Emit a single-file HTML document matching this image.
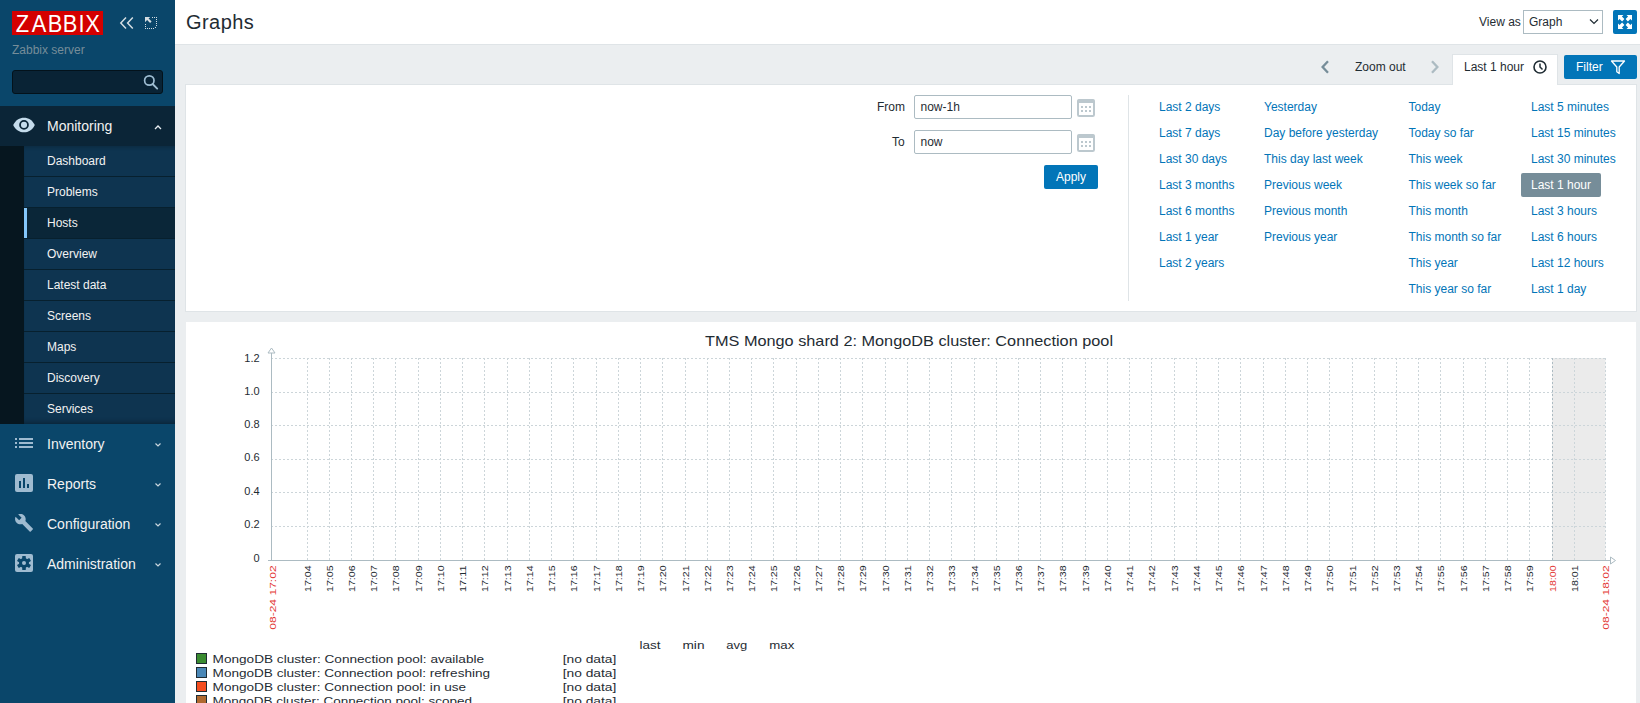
<!DOCTYPE html>
<html><head><meta charset="utf-8"><title>Graphs</title>
<style>
html,body{margin:0;padding:0;width:1640px;height:703px;overflow:hidden;background:#ebeef0;font-family:"Liberation Sans", sans-serif;}
.t{position:absolute;white-space:nowrap;}
</style></head><body>
<div id="sb" style="position:absolute;left:0;top:0;width:175px;height:703px;background:#0a466a"></div>
<div style="position:absolute;left:12px;top:11px;width:91px;height:24px;background:#d40000"></div>
<svg style="position:absolute;left:0;top:0" width="110" height="40" font-family='"Liberation Sans", sans-serif' font-size="23" fill="#fff"><text transform="translate(22.4 31.6) scale(0.95 1)" text-anchor="middle">Z</text><text transform="translate(39.1 31.6) scale(0.95 1)" text-anchor="middle">A</text><text transform="translate(55.0 31.6) scale(0.95 1)" text-anchor="middle">B</text><text transform="translate(70.1 31.6) scale(0.95 1)" text-anchor="middle">B</text><text transform="translate(81.6 31.6) scale(0.95 1)" text-anchor="middle">I</text><text transform="translate(92.6 31.6) scale(0.95 1)" text-anchor="middle">X</text></svg>
<svg style="position:absolute;left:115px;top:12px" width="50" height="22" viewBox="0 0 50 22">
<path d="M11 5.5 L5.8 11 L11 16.5 M17.8 5.5 L12.6 11 L17.8 16.5" stroke="#d4dde2" stroke-width="1.5" fill="none"/></svg>
<svg style="position:absolute;left:140px;top:12px" width="22" height="22" viewBox="140 12 22 22" shape-rendering="crispEdges"><rect x="152" y="17" width="1" height="1" fill="#d4dde2"/><rect x="154" y="17" width="1" height="1" fill="#d4dde2"/><rect x="156" y="17" width="1" height="1" fill="#d4dde2"/><rect x="156" y="19" width="1" height="1" fill="#d4dde2"/><rect x="156" y="21" width="1" height="1" fill="#d4dde2"/><rect x="156" y="23" width="1" height="1" fill="#d4dde2"/><rect x="156" y="25" width="1" height="1" fill="#d4dde2"/><rect x="145" y="24" width="1" height="1" fill="#d4dde2"/><rect x="145" y="26" width="1" height="1" fill="#d4dde2"/><rect x="145" y="28" width="1" height="1" fill="#d4dde2"/><rect x="147" y="28" width="1" height="1" fill="#d4dde2"/><rect x="149" y="28" width="1" height="1" fill="#d4dde2"/><rect x="151" y="28" width="1" height="1" fill="#d4dde2"/><rect x="153" y="28" width="1" height="1" fill="#d4dde2"/><rect x="155" y="27" width="1" height="1" fill="#d4dde2"/></svg>
<svg style="position:absolute;left:140px;top:12px" width="22" height="22" viewBox="140 12 22 22"><path d="M145 17 H150.2 L148.6 18.6 L151.6 21.6 L150.1 23.1 L147.1 20.1 L145 22.2 Z" fill="#d4dde2"/></svg>
<div class="t" style="left:12px;top:43.54px;font-size:12px;line-height:12px;color:#768d99;">Zabbix server</div>
<div style="position:absolute;left:12px;top:70px;width:149px;height:22px;border:1px solid #03121b;border-radius:3px;background:#092335"></div>
<svg style="position:absolute;left:140px;top:72px" width="20" height="20" viewBox="0 0 20 20">
<circle cx="9.3" cy="8.5" r="4.7" stroke="#9ebdd2" stroke-width="1.7" fill="none"/>
<path d="M12.6 12 L17.2 16.6" stroke="#9ebdd2" stroke-width="1.9" stroke-linecap="round"/></svg>
<div style="position:absolute;left:0;top:106px;width:175px;height:40px;background:#0b2537"></div>
<svg style="position:absolute;left:13px;top:117px" width="22" height="16" viewBox="0 0 22 16">
<path d="M0.2 8 C4.5 -1.8 17.5 -1.8 21.8 8 C17.5 17.8 4.5 17.8 0.2 8 Z" fill="#c5dcec"/>
<circle cx="11" cy="7.9" r="3.95" fill="none" stroke="#0b2537" stroke-width="1.8"/></svg>
<div class="t" style="left:47px;top:118.85px;font-size:14px;line-height:14px;color:#f2f2f2;">Monitoring</div>
<svg style="position:absolute;left:153px;top:123px" width="10" height="8" viewBox="0 0 10 8"><path d="M2 6 L5 3 L8 6" stroke="#e8eef2" stroke-width="1.3" fill="none"/></svg>
<div style="position:absolute;left:0;top:146px;width:24px;height:278px;background:#06161f"></div>
<div style="position:absolute;left:24px;top:146px;width:151px;height:278px;background:#0e3450;box-shadow:inset 0 4px 4px -3px rgba(0,0,0,.22), inset 0 -6px 5px -4px rgba(0,0,0,.3)"></div>
<div style="position:absolute;left:24px;top:176px;width:151px;height:1px;background:#07202e"></div>
<div class="t" style="left:47px;top:155.14px;font-size:12px;line-height:12px;color:#f2f2f2;">Dashboard</div>
<div style="position:absolute;left:24px;top:207px;width:151px;height:1px;background:#07202e"></div>
<div class="t" style="left:47px;top:186.14px;font-size:12px;line-height:12px;color:#f2f2f2;">Problems</div>
<div style="position:absolute;left:24px;top:208px;width:151px;height:30px;background:#0a2638"></div>
<div style="position:absolute;left:24px;top:208px;width:3px;height:30px;background:#84c7fb"></div>
<div style="position:absolute;left:24px;top:238px;width:151px;height:1px;background:#07202e"></div>
<div class="t" style="left:47px;top:217.14px;font-size:12px;line-height:12px;color:#f2f2f2;">Hosts</div>
<div style="position:absolute;left:24px;top:269px;width:151px;height:1px;background:#07202e"></div>
<div class="t" style="left:47px;top:248.14px;font-size:12px;line-height:12px;color:#f2f2f2;">Overview</div>
<div style="position:absolute;left:24px;top:300px;width:151px;height:1px;background:#07202e"></div>
<div class="t" style="left:47px;top:279.14px;font-size:12px;line-height:12px;color:#f2f2f2;">Latest data</div>
<div style="position:absolute;left:24px;top:331px;width:151px;height:1px;background:#07202e"></div>
<div class="t" style="left:47px;top:310.14px;font-size:12px;line-height:12px;color:#f2f2f2;">Screens</div>
<div style="position:absolute;left:24px;top:362px;width:151px;height:1px;background:#07202e"></div>
<div class="t" style="left:47px;top:341.14px;font-size:12px;line-height:12px;color:#f2f2f2;">Maps</div>
<div style="position:absolute;left:24px;top:393px;width:151px;height:1px;background:#07202e"></div>
<div class="t" style="left:47px;top:372.14px;font-size:12px;line-height:12px;color:#f2f2f2;">Discovery</div>
<div class="t" style="left:47px;top:403.14px;font-size:12px;line-height:12px;color:#f2f2f2;">Services</div>
<div class="t" style="left:47px;top:436.95px;font-size:14px;line-height:14px;color:#f2f2f2;">Inventory</div>
<svg style="position:absolute;left:153px;top:441px" width="10" height="8" viewBox="0 0 10 8"><path d="M2.5 2.5 L5 5 L7.5 2.5" stroke="#c9d6de" stroke-width="1.2" fill="none"/></svg>
<div class="t" style="left:47px;top:476.95px;font-size:14px;line-height:14px;color:#f2f2f2;">Reports</div>
<svg style="position:absolute;left:153px;top:481px" width="10" height="8" viewBox="0 0 10 8"><path d="M2.5 2.5 L5 5 L7.5 2.5" stroke="#c9d6de" stroke-width="1.2" fill="none"/></svg>
<div class="t" style="left:47px;top:516.95px;font-size:14px;line-height:14px;color:#f2f2f2;">Configuration</div>
<svg style="position:absolute;left:153px;top:521px" width="10" height="8" viewBox="0 0 10 8"><path d="M2.5 2.5 L5 5 L7.5 2.5" stroke="#c9d6de" stroke-width="1.2" fill="none"/></svg>
<div class="t" style="left:47px;top:556.95px;font-size:14px;line-height:14px;color:#f2f2f2;">Administration</div>
<svg style="position:absolute;left:153px;top:561px" width="10" height="8" viewBox="0 0 10 8"><path d="M2.5 2.5 L5 5 L7.5 2.5" stroke="#c9d6de" stroke-width="1.2" fill="none"/></svg>
<svg style="position:absolute;left:15px;top:438px" width="18" height="12" viewBox="0 0 18 12" fill="#9fbbd0">
<rect x="0" y="0" width="2" height="2"/><rect x="4" y="0" width="14" height="2"/>
<rect x="0" y="4" width="2" height="2"/><rect x="4" y="4" width="14" height="2"/>
<rect x="0" y="8" width="2" height="2"/><rect x="4" y="8" width="14" height="2"/></svg>
<svg style="position:absolute;left:15px;top:474px" width="18" height="18" viewBox="0 0 18 18">
<rect x="0" y="0" width="18" height="18" rx="2" fill="#9fbbd0"/>
<rect x="4" y="7" width="2" height="7" fill="#0a466a"/><rect x="8" y="4" width="2" height="10" fill="#0a466a"/><rect x="12" y="10" width="2" height="4" fill="#0a466a"/></svg>
<svg style="position:absolute;left:15px;top:514px" width="18" height="18" viewBox="0.9 1.3 22.1 22.1">
<path fill="#9fbbd0" d="M22.7 19l-9.1-9.1c.9-2.3.4-5-1.5-6.9-2-2-5-2.4-7.4-1.3L9 6 6 9 1.6 4.7C.4 7.1.9 10.1 2.9 12.1c1.9 1.9 4.6 2.4 6.9 1.5l9.1 9.1c.4.4 1 .4 1.4 0l2.3-2.3c.5-.4.5-1.1.1-1.4z"/></svg>
<svg style="position:absolute;left:15px;top:554px" width="18" height="18" viewBox="0 0 18 18">
<rect x="0" y="0" width="18" height="18" rx="2" fill="#9fbbd0"/>
<g transform="translate(9 9)" fill="#0a466a">
<circle r="5"/>
<rect x="-1.8" y="-7.1" width="3.6" height="14.2" rx="0.6"/>
<rect x="-1.8" y="-7.1" width="3.6" height="14.2" rx="0.6" transform="rotate(60)"/>
<rect x="-1.8" y="-7.1" width="3.6" height="14.2" rx="0.6" transform="rotate(120)"/>
<circle r="2" fill="#9fbbd0"/></g></svg>
<div style="position:absolute;left:175px;top:0;width:1465px;height:44px;background:#fff;border-bottom:1px solid #dfe4e7"></div>
<div class="t" style="left:186px;top:11.87px;font-size:20px;line-height:20px;color:#1f2c33;letter-spacing:0.45px;">Graphs</div>
<div class="t" style="left:1479px;top:15.54px;font-size:12px;line-height:12px;color:#1f2c33;">View as</div>
<div style="position:absolute;left:1523px;top:10px;width:78px;height:22px;border:1px solid #acbbc2;background:#fff"></div>
<div class="t" style="left:1529px;top:15.54px;font-size:12px;line-height:12px;color:#1f2c33;">Graph</div>
<svg style="position:absolute;left:1588px;top:17px" width="12" height="9" viewBox="0 0 12 9"><path d="M2 2.5 L6 6.5 L10 2.5" stroke="#1f2c33" stroke-width="1.2" fill="none"/></svg>
<div style="position:absolute;left:1613px;top:10px;width:24px;height:24px;background:#0275b8;border-radius:2px"></div>
<svg style="position:absolute;left:1613px;top:10px" width="24" height="24" viewBox="0 0 24 24" fill="#fff">
<g transform="translate(5 5)"><path d="M0 0 H5.5 L3.9 1.6 L6.4 4.1 L4.1 6.4 L1.6 3.9 L0 5.5 Z"/></g>
<g transform="translate(19 5) scale(-1 1)"><path d="M0 0 H5.5 L3.9 1.6 L6.4 4.1 L4.1 6.4 L1.6 3.9 L0 5.5 Z"/></g>
<g transform="translate(5 19) scale(1 -1)"><path d="M0 0 H5.5 L3.9 1.6 L6.4 4.1 L4.1 6.4 L1.6 3.9 L0 5.5 Z"/></g>
<g transform="translate(19 19) scale(-1 -1)"><path d="M0 0 H5.5 L3.9 1.6 L6.4 4.1 L4.1 6.4 L1.6 3.9 L0 5.5 Z"/></g></svg>
<svg style="position:absolute;left:1316px;top:58px" width="18" height="18" viewBox="0 0 18 18"><path d="M12 3.2 L6.6 9 L12 14.8" stroke="#768d99" stroke-width="2.3" fill="none"/></svg>
<div class="t" style="left:1355px;top:60.84px;font-size:12px;line-height:12px;color:#1f2c33;">Zoom out</div>
<svg style="position:absolute;left:1426px;top:58px" width="18" height="18" viewBox="0 0 18 18"><path d="M6 3.2 L11.4 9 L6 14.8" stroke="#acbbc2" stroke-width="2.3" fill="none"/></svg>
<div style="position:absolute;left:185px;top:84px;width:1450px;height:226px;background:#fff;border:1px solid #dfe4e7"></div>
<div style="position:absolute;left:1452px;top:54px;width:104px;height:30px;background:#fff;border:1px solid #dfe4e7;border-bottom:none"></div>
<div class="t" style="left:1464px;top:60.64px;font-size:12px;line-height:12px;color:#1f2c33;">Last 1 hour</div>
<svg style="position:absolute;left:1532px;top:59px" width="16" height="16" viewBox="0 0 16 16"><circle cx="8" cy="8" r="6" stroke="#1f2c33" stroke-width="1.6" fill="none"/><path d="M8 4.5 V8 L10.5 10.5" stroke="#1f2c33" stroke-width="1.5" fill="none"/></svg>
<div style="position:absolute;left:1564px;top:55px;width:73px;height:24px;background:#0275b8;border-radius:2px"></div>
<div class="t" style="left:1576px;top:60.64px;font-size:12px;line-height:12px;color:#ffffff;">Filter</div>
<svg style="position:absolute;left:1609px;top:58px" width="18" height="18" viewBox="0 0 18 18"><path d="M2.5 3 H15.5 L10.2 9 V15.5 L7.8 13.8 V9 Z" stroke="#fff" stroke-width="1.3" fill="none" stroke-linejoin="round"/></svg>
<div class="t" style="left:877px;top:101.34px;font-size:12px;line-height:12px;color:#1f2c33;">From</div>
<div class="t" style="left:892px;top:136.34px;font-size:12px;line-height:12px;color:#1f2c33;">To</div>
<div style="position:absolute;left:914px;top:95px;width:156px;height:22px;border:1px solid #acbbc2;border-radius:2px;background:#fff"></div>
<div class="t" style="left:920.5px;top:101.34px;font-size:12px;line-height:12px;color:#1f2c33;">now-1h</div>
<svg style="position:absolute;left:1077px;top:99px" width="18" height="18" viewBox="0 0 18 18">
<rect x="1" y="1" width="16" height="16" rx="1.3" fill="none" stroke="#bcc8ce" stroke-width="2"/>
<rect x="0.5" y="0.5" width="17" height="3.4" rx="1" fill="#bcc8ce"/>
<g fill="#bcc8ce"><rect x="4" y="7" width="2" height="2"/><rect x="8" y="7" width="2" height="2"/><rect x="12" y="7" width="2" height="2"/>
<rect x="4" y="11" width="2" height="2"/><rect x="8" y="11" width="2" height="2"/><rect x="12" y="11" width="2" height="2"/></g></svg>
<div style="position:absolute;left:914px;top:130px;width:156px;height:22px;border:1px solid #acbbc2;border-radius:2px;background:#fff"></div>
<div class="t" style="left:920.5px;top:136.34px;font-size:12px;line-height:12px;color:#1f2c33;">now</div>
<svg style="position:absolute;left:1077px;top:134px" width="18" height="18" viewBox="0 0 18 18">
<rect x="1" y="1" width="16" height="16" rx="1.3" fill="none" stroke="#bcc8ce" stroke-width="2"/>
<rect x="0.5" y="0.5" width="17" height="3.4" rx="1" fill="#bcc8ce"/>
<g fill="#bcc8ce"><rect x="4" y="7" width="2" height="2"/><rect x="8" y="7" width="2" height="2"/><rect x="12" y="7" width="2" height="2"/>
<rect x="4" y="11" width="2" height="2"/><rect x="8" y="11" width="2" height="2"/><rect x="12" y="11" width="2" height="2"/></g></svg>
<div style="position:absolute;left:1044px;top:165px;width:54px;height:24px;background:#0275b8;border-radius:2px"></div>
<div class="t" style="left:1056px;top:171.34px;font-size:12px;line-height:12px;color:#ffffff;">Apply</div>
<div style="position:absolute;left:1128px;top:95px;width:1px;height:206px;background:#dfe4e7"></div>
<div class="t" style="left:1159px;top:101.24px;font-size:12px;line-height:12px;color:#0275b8;">Last 2 days</div>
<div class="t" style="left:1159px;top:127.24px;font-size:12px;line-height:12px;color:#0275b8;">Last 7 days</div>
<div class="t" style="left:1159px;top:153.24px;font-size:12px;line-height:12px;color:#0275b8;">Last 30 days</div>
<div class="t" style="left:1159px;top:179.24px;font-size:12px;line-height:12px;color:#0275b8;">Last 3 months</div>
<div class="t" style="left:1159px;top:205.24px;font-size:12px;line-height:12px;color:#0275b8;">Last 6 months</div>
<div class="t" style="left:1159px;top:231.24px;font-size:12px;line-height:12px;color:#0275b8;">Last 1 year</div>
<div class="t" style="left:1159px;top:257.24px;font-size:12px;line-height:12px;color:#0275b8;">Last 2 years</div>
<div class="t" style="left:1264px;top:101.24px;font-size:12px;line-height:12px;color:#0275b8;">Yesterday</div>
<div class="t" style="left:1264px;top:127.24px;font-size:12px;line-height:12px;color:#0275b8;">Day before yesterday</div>
<div class="t" style="left:1264px;top:153.24px;font-size:12px;line-height:12px;color:#0275b8;">This day last week</div>
<div class="t" style="left:1264px;top:179.24px;font-size:12px;line-height:12px;color:#0275b8;">Previous week</div>
<div class="t" style="left:1264px;top:205.24px;font-size:12px;line-height:12px;color:#0275b8;">Previous month</div>
<div class="t" style="left:1264px;top:231.24px;font-size:12px;line-height:12px;color:#0275b8;">Previous year</div>
<div class="t" style="left:1408.5px;top:101.24px;font-size:12px;line-height:12px;color:#0275b8;">Today</div>
<div class="t" style="left:1408.5px;top:127.24px;font-size:12px;line-height:12px;color:#0275b8;">Today so far</div>
<div class="t" style="left:1408.5px;top:153.24px;font-size:12px;line-height:12px;color:#0275b8;">This week</div>
<div class="t" style="left:1408.5px;top:179.24px;font-size:12px;line-height:12px;color:#0275b8;">This week so far</div>
<div class="t" style="left:1408.5px;top:205.24px;font-size:12px;line-height:12px;color:#0275b8;">This month</div>
<div class="t" style="left:1408.5px;top:231.24px;font-size:12px;line-height:12px;color:#0275b8;">This month so far</div>
<div class="t" style="left:1408.5px;top:257.24px;font-size:12px;line-height:12px;color:#0275b8;">This year</div>
<div class="t" style="left:1408.5px;top:283.24px;font-size:12px;line-height:12px;color:#0275b8;">This year so far</div>
<div class="t" style="left:1531px;top:101.24px;font-size:12px;line-height:12px;color:#0275b8;">Last 5 minutes</div>
<div class="t" style="left:1531px;top:127.24px;font-size:12px;line-height:12px;color:#0275b8;">Last 15 minutes</div>
<div class="t" style="left:1531px;top:153.24px;font-size:12px;line-height:12px;color:#0275b8;">Last 30 minutes</div>
<div style="position:absolute;left:1521px;top:173px;width:80px;height:24px;background:#768d99;border-radius:2px"></div>
<div class="t" style="left:1531px;top:179.24px;font-size:12px;line-height:12px;color:#ffffff;">Last 1 hour</div>
<div class="t" style="left:1531px;top:205.24px;font-size:12px;line-height:12px;color:#0275b8;">Last 3 hours</div>
<div class="t" style="left:1531px;top:231.24px;font-size:12px;line-height:12px;color:#0275b8;">Last 6 hours</div>
<div class="t" style="left:1531px;top:257.24px;font-size:12px;line-height:12px;color:#0275b8;">Last 12 hours</div>
<div class="t" style="left:1531px;top:283.24px;font-size:12px;line-height:12px;color:#0275b8;">Last 1 day</div>
<div style="position:absolute;left:186px;top:322px;width:1450px;height:381px;background:#fff"></div>
<svg style="position:absolute;left:0;top:0" width="1640" height="703" viewBox="0 0 1640 703" font-family='"Liberation Sans", sans-serif'>
<rect x="1552.00" y="358.0" width="53.50" height="202.0" fill="#ebebeb"/>
<line x1="271" y1="358.5" x2="1605.5" y2="358.5" stroke="#ccd5d9" stroke-dasharray="2 2"/>
<line x1="271" y1="392.5" x2="1605.5" y2="392.5" stroke="#ccd5d9" stroke-dasharray="2 2"/>
<line x1="271" y1="425.5" x2="1605.5" y2="425.5" stroke="#ccd5d9" stroke-dasharray="2 2"/>
<line x1="271" y1="459.5" x2="1605.5" y2="459.5" stroke="#ccd5d9" stroke-dasharray="2 2"/>
<line x1="271" y1="492.5" x2="1605.5" y2="492.5" stroke="#ccd5d9" stroke-dasharray="2 2"/>
<line x1="271" y1="526.5" x2="1605.5" y2="526.5" stroke="#ccd5d9" stroke-dasharray="2 2"/>
<line x1="307.5" y1="358" x2="307.5" y2="560" stroke="#ccd5d9" stroke-dasharray="2 2"/>
<text transform="translate(310.90 565.4) rotate(-90)" text-anchor="end" font-size="9.95" fill="#1f2c33" textLength="26.6" lengthAdjust="spacingAndGlyphs">17:04</text>
<line x1="329.5" y1="358" x2="329.5" y2="560" stroke="#ccd5d9" stroke-dasharray="2 2"/>
<text transform="translate(332.90 565.4) rotate(-90)" text-anchor="end" font-size="9.95" fill="#1f2c33" textLength="26.6" lengthAdjust="spacingAndGlyphs">17:05</text>
<line x1="351.5" y1="358" x2="351.5" y2="560" stroke="#ccd5d9" stroke-dasharray="2 2"/>
<text transform="translate(354.90 565.4) rotate(-90)" text-anchor="end" font-size="9.95" fill="#1f2c33" textLength="26.6" lengthAdjust="spacingAndGlyphs">17:06</text>
<line x1="373.5" y1="358" x2="373.5" y2="560" stroke="#ccd5d9" stroke-dasharray="2 2"/>
<text transform="translate(376.90 565.4) rotate(-90)" text-anchor="end" font-size="9.95" fill="#1f2c33" textLength="26.6" lengthAdjust="spacingAndGlyphs">17:07</text>
<line x1="395.5" y1="358" x2="395.5" y2="560" stroke="#ccd5d9" stroke-dasharray="2 2"/>
<text transform="translate(398.90 565.4) rotate(-90)" text-anchor="end" font-size="9.95" fill="#1f2c33" textLength="26.6" lengthAdjust="spacingAndGlyphs">17:08</text>
<line x1="418.5" y1="358" x2="418.5" y2="560" stroke="#ccd5d9" stroke-dasharray="2 2"/>
<text transform="translate(421.90 565.4) rotate(-90)" text-anchor="end" font-size="9.95" fill="#1f2c33" textLength="26.6" lengthAdjust="spacingAndGlyphs">17:09</text>
<line x1="440.5" y1="358" x2="440.5" y2="560" stroke="#ccd5d9" stroke-dasharray="2 2"/>
<text transform="translate(443.90 565.4) rotate(-90)" text-anchor="end" font-size="9.95" fill="#1f2c33" textLength="26.6" lengthAdjust="spacingAndGlyphs">17:10</text>
<line x1="462.5" y1="358" x2="462.5" y2="560" stroke="#ccd5d9" stroke-dasharray="2 2"/>
<text transform="translate(465.90 565.4) rotate(-90)" text-anchor="end" font-size="9.95" fill="#1f2c33" textLength="26.6" lengthAdjust="spacingAndGlyphs">17:11</text>
<line x1="484.5" y1="358" x2="484.5" y2="560" stroke="#ccd5d9" stroke-dasharray="2 2"/>
<text transform="translate(487.90 565.4) rotate(-90)" text-anchor="end" font-size="9.95" fill="#1f2c33" textLength="26.6" lengthAdjust="spacingAndGlyphs">17:12</text>
<line x1="507.5" y1="358" x2="507.5" y2="560" stroke="#ccd5d9" stroke-dasharray="2 2"/>
<text transform="translate(510.90 565.4) rotate(-90)" text-anchor="end" font-size="9.95" fill="#1f2c33" textLength="26.6" lengthAdjust="spacingAndGlyphs">17:13</text>
<line x1="529.5" y1="358" x2="529.5" y2="560" stroke="#ccd5d9" stroke-dasharray="2 2"/>
<text transform="translate(532.90 565.4) rotate(-90)" text-anchor="end" font-size="9.95" fill="#1f2c33" textLength="26.6" lengthAdjust="spacingAndGlyphs">17:14</text>
<line x1="551.5" y1="358" x2="551.5" y2="560" stroke="#ccd5d9" stroke-dasharray="2 2"/>
<text transform="translate(554.90 565.4) rotate(-90)" text-anchor="end" font-size="9.95" fill="#1f2c33" textLength="26.6" lengthAdjust="spacingAndGlyphs">17:15</text>
<line x1="573.5" y1="358" x2="573.5" y2="560" stroke="#ccd5d9" stroke-dasharray="2 2"/>
<text transform="translate(576.90 565.4) rotate(-90)" text-anchor="end" font-size="9.95" fill="#1f2c33" textLength="26.6" lengthAdjust="spacingAndGlyphs">17:16</text>
<line x1="596.5" y1="358" x2="596.5" y2="560" stroke="#ccd5d9" stroke-dasharray="2 2"/>
<text transform="translate(599.90 565.4) rotate(-90)" text-anchor="end" font-size="9.95" fill="#1f2c33" textLength="26.6" lengthAdjust="spacingAndGlyphs">17:17</text>
<line x1="618.5" y1="358" x2="618.5" y2="560" stroke="#ccd5d9" stroke-dasharray="2 2"/>
<text transform="translate(621.90 565.4) rotate(-90)" text-anchor="end" font-size="9.95" fill="#1f2c33" textLength="26.6" lengthAdjust="spacingAndGlyphs">17:18</text>
<line x1="640.5" y1="358" x2="640.5" y2="560" stroke="#ccd5d9" stroke-dasharray="2 2"/>
<text transform="translate(643.90 565.4) rotate(-90)" text-anchor="end" font-size="9.95" fill="#1f2c33" textLength="26.6" lengthAdjust="spacingAndGlyphs">17:19</text>
<line x1="662.5" y1="358" x2="662.5" y2="560" stroke="#ccd5d9" stroke-dasharray="2 2"/>
<text transform="translate(665.90 565.4) rotate(-90)" text-anchor="end" font-size="9.95" fill="#1f2c33" textLength="26.6" lengthAdjust="spacingAndGlyphs">17:20</text>
<line x1="685.5" y1="358" x2="685.5" y2="560" stroke="#ccd5d9" stroke-dasharray="2 2"/>
<text transform="translate(688.90 565.4) rotate(-90)" text-anchor="end" font-size="9.95" fill="#1f2c33" textLength="26.6" lengthAdjust="spacingAndGlyphs">17:21</text>
<line x1="707.5" y1="358" x2="707.5" y2="560" stroke="#ccd5d9" stroke-dasharray="2 2"/>
<text transform="translate(710.90 565.4) rotate(-90)" text-anchor="end" font-size="9.95" fill="#1f2c33" textLength="26.6" lengthAdjust="spacingAndGlyphs">17:22</text>
<line x1="729.5" y1="358" x2="729.5" y2="560" stroke="#ccd5d9" stroke-dasharray="2 2"/>
<text transform="translate(732.90 565.4) rotate(-90)" text-anchor="end" font-size="9.95" fill="#1f2c33" textLength="26.6" lengthAdjust="spacingAndGlyphs">17:23</text>
<line x1="751.5" y1="358" x2="751.5" y2="560" stroke="#ccd5d9" stroke-dasharray="2 2"/>
<text transform="translate(754.90 565.4) rotate(-90)" text-anchor="end" font-size="9.95" fill="#1f2c33" textLength="26.6" lengthAdjust="spacingAndGlyphs">17:24</text>
<line x1="773.5" y1="358" x2="773.5" y2="560" stroke="#ccd5d9" stroke-dasharray="2 2"/>
<text transform="translate(776.90 565.4) rotate(-90)" text-anchor="end" font-size="9.95" fill="#1f2c33" textLength="26.6" lengthAdjust="spacingAndGlyphs">17:25</text>
<line x1="796.5" y1="358" x2="796.5" y2="560" stroke="#ccd5d9" stroke-dasharray="2 2"/>
<text transform="translate(799.90 565.4) rotate(-90)" text-anchor="end" font-size="9.95" fill="#1f2c33" textLength="26.6" lengthAdjust="spacingAndGlyphs">17:26</text>
<line x1="818.5" y1="358" x2="818.5" y2="560" stroke="#ccd5d9" stroke-dasharray="2 2"/>
<text transform="translate(821.90 565.4) rotate(-90)" text-anchor="end" font-size="9.95" fill="#1f2c33" textLength="26.6" lengthAdjust="spacingAndGlyphs">17:27</text>
<line x1="840.5" y1="358" x2="840.5" y2="560" stroke="#ccd5d9" stroke-dasharray="2 2"/>
<text transform="translate(843.90 565.4) rotate(-90)" text-anchor="end" font-size="9.95" fill="#1f2c33" textLength="26.6" lengthAdjust="spacingAndGlyphs">17:28</text>
<line x1="862.5" y1="358" x2="862.5" y2="560" stroke="#ccd5d9" stroke-dasharray="2 2"/>
<text transform="translate(865.90 565.4) rotate(-90)" text-anchor="end" font-size="9.95" fill="#1f2c33" textLength="26.6" lengthAdjust="spacingAndGlyphs">17:29</text>
<line x1="885.5" y1="358" x2="885.5" y2="560" stroke="#ccd5d9" stroke-dasharray="2 2"/>
<text transform="translate(888.90 565.4) rotate(-90)" text-anchor="end" font-size="9.95" fill="#1f2c33" textLength="26.6" lengthAdjust="spacingAndGlyphs">17:30</text>
<line x1="907.5" y1="358" x2="907.5" y2="560" stroke="#ccd5d9" stroke-dasharray="2 2"/>
<text transform="translate(910.90 565.4) rotate(-90)" text-anchor="end" font-size="9.95" fill="#1f2c33" textLength="26.6" lengthAdjust="spacingAndGlyphs">17:31</text>
<line x1="929.5" y1="358" x2="929.5" y2="560" stroke="#ccd5d9" stroke-dasharray="2 2"/>
<text transform="translate(932.90 565.4) rotate(-90)" text-anchor="end" font-size="9.95" fill="#1f2c33" textLength="26.6" lengthAdjust="spacingAndGlyphs">17:32</text>
<line x1="951.5" y1="358" x2="951.5" y2="560" stroke="#ccd5d9" stroke-dasharray="2 2"/>
<text transform="translate(954.90 565.4) rotate(-90)" text-anchor="end" font-size="9.95" fill="#1f2c33" textLength="26.6" lengthAdjust="spacingAndGlyphs">17:33</text>
<line x1="974.5" y1="358" x2="974.5" y2="560" stroke="#ccd5d9" stroke-dasharray="2 2"/>
<text transform="translate(977.90 565.4) rotate(-90)" text-anchor="end" font-size="9.95" fill="#1f2c33" textLength="26.6" lengthAdjust="spacingAndGlyphs">17:34</text>
<line x1="996.5" y1="358" x2="996.5" y2="560" stroke="#ccd5d9" stroke-dasharray="2 2"/>
<text transform="translate(999.90 565.4) rotate(-90)" text-anchor="end" font-size="9.95" fill="#1f2c33" textLength="26.6" lengthAdjust="spacingAndGlyphs">17:35</text>
<line x1="1018.5" y1="358" x2="1018.5" y2="560" stroke="#ccd5d9" stroke-dasharray="2 2"/>
<text transform="translate(1021.90 565.4) rotate(-90)" text-anchor="end" font-size="9.95" fill="#1f2c33" textLength="26.6" lengthAdjust="spacingAndGlyphs">17:36</text>
<line x1="1040.5" y1="358" x2="1040.5" y2="560" stroke="#ccd5d9" stroke-dasharray="2 2"/>
<text transform="translate(1043.90 565.4) rotate(-90)" text-anchor="end" font-size="9.95" fill="#1f2c33" textLength="26.6" lengthAdjust="spacingAndGlyphs">17:37</text>
<line x1="1062.5" y1="358" x2="1062.5" y2="560" stroke="#ccd5d9" stroke-dasharray="2 2"/>
<text transform="translate(1065.90 565.4) rotate(-90)" text-anchor="end" font-size="9.95" fill="#1f2c33" textLength="26.6" lengthAdjust="spacingAndGlyphs">17:38</text>
<line x1="1085.5" y1="358" x2="1085.5" y2="560" stroke="#ccd5d9" stroke-dasharray="2 2"/>
<text transform="translate(1088.90 565.4) rotate(-90)" text-anchor="end" font-size="9.95" fill="#1f2c33" textLength="26.6" lengthAdjust="spacingAndGlyphs">17:39</text>
<line x1="1107.5" y1="358" x2="1107.5" y2="560" stroke="#ccd5d9" stroke-dasharray="2 2"/>
<text transform="translate(1110.90 565.4) rotate(-90)" text-anchor="end" font-size="9.95" fill="#1f2c33" textLength="26.6" lengthAdjust="spacingAndGlyphs">17:40</text>
<line x1="1129.5" y1="358" x2="1129.5" y2="560" stroke="#ccd5d9" stroke-dasharray="2 2"/>
<text transform="translate(1132.90 565.4) rotate(-90)" text-anchor="end" font-size="9.95" fill="#1f2c33" textLength="26.6" lengthAdjust="spacingAndGlyphs">17:41</text>
<line x1="1151.5" y1="358" x2="1151.5" y2="560" stroke="#ccd5d9" stroke-dasharray="2 2"/>
<text transform="translate(1154.90 565.4) rotate(-90)" text-anchor="end" font-size="9.95" fill="#1f2c33" textLength="26.6" lengthAdjust="spacingAndGlyphs">17:42</text>
<line x1="1174.5" y1="358" x2="1174.5" y2="560" stroke="#ccd5d9" stroke-dasharray="2 2"/>
<text transform="translate(1177.90 565.4) rotate(-90)" text-anchor="end" font-size="9.95" fill="#1f2c33" textLength="26.6" lengthAdjust="spacingAndGlyphs">17:43</text>
<line x1="1196.5" y1="358" x2="1196.5" y2="560" stroke="#ccd5d9" stroke-dasharray="2 2"/>
<text transform="translate(1199.90 565.4) rotate(-90)" text-anchor="end" font-size="9.95" fill="#1f2c33" textLength="26.6" lengthAdjust="spacingAndGlyphs">17:44</text>
<line x1="1218.5" y1="358" x2="1218.5" y2="560" stroke="#ccd5d9" stroke-dasharray="2 2"/>
<text transform="translate(1221.90 565.4) rotate(-90)" text-anchor="end" font-size="9.95" fill="#1f2c33" textLength="26.6" lengthAdjust="spacingAndGlyphs">17:45</text>
<line x1="1240.5" y1="358" x2="1240.5" y2="560" stroke="#ccd5d9" stroke-dasharray="2 2"/>
<text transform="translate(1243.90 565.4) rotate(-90)" text-anchor="end" font-size="9.95" fill="#1f2c33" textLength="26.6" lengthAdjust="spacingAndGlyphs">17:46</text>
<line x1="1263.5" y1="358" x2="1263.5" y2="560" stroke="#ccd5d9" stroke-dasharray="2 2"/>
<text transform="translate(1266.90 565.4) rotate(-90)" text-anchor="end" font-size="9.95" fill="#1f2c33" textLength="26.6" lengthAdjust="spacingAndGlyphs">17:47</text>
<line x1="1285.5" y1="358" x2="1285.5" y2="560" stroke="#ccd5d9" stroke-dasharray="2 2"/>
<text transform="translate(1288.90 565.4) rotate(-90)" text-anchor="end" font-size="9.95" fill="#1f2c33" textLength="26.6" lengthAdjust="spacingAndGlyphs">17:48</text>
<line x1="1307.5" y1="358" x2="1307.5" y2="560" stroke="#ccd5d9" stroke-dasharray="2 2"/>
<text transform="translate(1310.90 565.4) rotate(-90)" text-anchor="end" font-size="9.95" fill="#1f2c33" textLength="26.6" lengthAdjust="spacingAndGlyphs">17:49</text>
<line x1="1329.5" y1="358" x2="1329.5" y2="560" stroke="#ccd5d9" stroke-dasharray="2 2"/>
<text transform="translate(1332.90 565.4) rotate(-90)" text-anchor="end" font-size="9.95" fill="#1f2c33" textLength="26.6" lengthAdjust="spacingAndGlyphs">17:50</text>
<line x1="1352.5" y1="358" x2="1352.5" y2="560" stroke="#ccd5d9" stroke-dasharray="2 2"/>
<text transform="translate(1355.90 565.4) rotate(-90)" text-anchor="end" font-size="9.95" fill="#1f2c33" textLength="26.6" lengthAdjust="spacingAndGlyphs">17:51</text>
<line x1="1374.5" y1="358" x2="1374.5" y2="560" stroke="#ccd5d9" stroke-dasharray="2 2"/>
<text transform="translate(1377.90 565.4) rotate(-90)" text-anchor="end" font-size="9.95" fill="#1f2c33" textLength="26.6" lengthAdjust="spacingAndGlyphs">17:52</text>
<line x1="1396.5" y1="358" x2="1396.5" y2="560" stroke="#ccd5d9" stroke-dasharray="2 2"/>
<text transform="translate(1399.90 565.4) rotate(-90)" text-anchor="end" font-size="9.95" fill="#1f2c33" textLength="26.6" lengthAdjust="spacingAndGlyphs">17:53</text>
<line x1="1418.5" y1="358" x2="1418.5" y2="560" stroke="#ccd5d9" stroke-dasharray="2 2"/>
<text transform="translate(1421.90 565.4) rotate(-90)" text-anchor="end" font-size="9.95" fill="#1f2c33" textLength="26.6" lengthAdjust="spacingAndGlyphs">17:54</text>
<line x1="1440.5" y1="358" x2="1440.5" y2="560" stroke="#ccd5d9" stroke-dasharray="2 2"/>
<text transform="translate(1443.90 565.4) rotate(-90)" text-anchor="end" font-size="9.95" fill="#1f2c33" textLength="26.6" lengthAdjust="spacingAndGlyphs">17:55</text>
<line x1="1463.5" y1="358" x2="1463.5" y2="560" stroke="#ccd5d9" stroke-dasharray="2 2"/>
<text transform="translate(1466.90 565.4) rotate(-90)" text-anchor="end" font-size="9.95" fill="#1f2c33" textLength="26.6" lengthAdjust="spacingAndGlyphs">17:56</text>
<line x1="1485.5" y1="358" x2="1485.5" y2="560" stroke="#ccd5d9" stroke-dasharray="2 2"/>
<text transform="translate(1488.90 565.4) rotate(-90)" text-anchor="end" font-size="9.95" fill="#1f2c33" textLength="26.6" lengthAdjust="spacingAndGlyphs">17:57</text>
<line x1="1507.5" y1="358" x2="1507.5" y2="560" stroke="#ccd5d9" stroke-dasharray="2 2"/>
<text transform="translate(1510.90 565.4) rotate(-90)" text-anchor="end" font-size="9.95" fill="#1f2c33" textLength="26.6" lengthAdjust="spacingAndGlyphs">17:58</text>
<line x1="1529.5" y1="358" x2="1529.5" y2="560" stroke="#ccd5d9" stroke-dasharray="2 2"/>
<text transform="translate(1532.90 565.4) rotate(-90)" text-anchor="end" font-size="9.95" fill="#1f2c33" textLength="26.6" lengthAdjust="spacingAndGlyphs">17:59</text>
<line x1="1552.5" y1="358" x2="1552.5" y2="560" stroke="#acbbc2" stroke-dasharray="2 2"/>
<text transform="translate(1555.90 565.4) rotate(-90)" text-anchor="end" font-size="9.95" fill="#e33734" textLength="26.6" lengthAdjust="spacingAndGlyphs">18:00</text>
<line x1="1574.5" y1="358" x2="1574.5" y2="560" stroke="#ccd5d9" stroke-dasharray="2 2"/>
<text transform="translate(1577.90 565.4) rotate(-90)" text-anchor="end" font-size="9.95" fill="#1f2c33" textLength="26.6" lengthAdjust="spacingAndGlyphs">18:01</text>
<line x1="1605.5" y1="358" x2="1605.5" y2="560" stroke="#ccd5d9" stroke-dasharray="2 2"/>
<line x1="271.5" y1="353" x2="271.5" y2="560.5" stroke="#acbbc2"/>
<line x1="268" y1="560.5" x2="1610.5" y2="560.5" stroke="#acbbc2"/>
<path d="M268.0 353 L271.5 348 L275.0 353 Z" fill="#fff" stroke="#acbbc2"/>
<path d="M1610.5 557.0 L1615.5 560.5 L1610.5 564.0 Z" fill="#fff" stroke="#acbbc2"/>
<text x="259.6" y="361.65" text-anchor="end" font-size="11" fill="#1f2c33">1.2</text>
<text x="259.6" y="394.75" text-anchor="end" font-size="11" fill="#1f2c33">1.0</text>
<text x="259.6" y="427.75" text-anchor="end" font-size="11" fill="#1f2c33">0.8</text>
<text x="259.6" y="461.45" text-anchor="end" font-size="11" fill="#1f2c33">0.6</text>
<text x="259.6" y="495.45" text-anchor="end" font-size="11" fill="#1f2c33">0.4</text>
<text x="259.6" y="528.45" text-anchor="end" font-size="11" fill="#1f2c33">0.2</text>
<text x="259.6" y="562.45" text-anchor="end" font-size="11" fill="#1f2c33">0</text>
<text transform="translate(276.0 565.4) rotate(-90)" text-anchor="end" font-size="9.95" fill="#e33734" textLength="64.4" lengthAdjust="spacingAndGlyphs">08-24 17:02</text>
<text transform="translate(1609.3 565.4) rotate(-90)" text-anchor="end" font-size="9.95" fill="#e33734" textLength="64.4" lengthAdjust="spacingAndGlyphs">08-24 18:02</text>
<text x="705" y="345.7" font-size="15" fill="#1f2c33" textLength="408" lengthAdjust="spacingAndGlyphs">TMS Mongo shard 2: MongoDB cluster: Connection pool</text>
<text x="639.5" y="649.3" font-size="11" fill="#1f2c33" textLength="21" lengthAdjust="spacingAndGlyphs">last</text>
<text x="682.5" y="649.3" font-size="11" fill="#1f2c33" textLength="22" lengthAdjust="spacingAndGlyphs">min</text>
<text x="726.3" y="649.3" font-size="11" fill="#1f2c33" textLength="21" lengthAdjust="spacingAndGlyphs">avg</text>
<text x="769.3" y="649.3" font-size="11" fill="#1f2c33" textLength="25" lengthAdjust="spacingAndGlyphs">max</text>
<rect x="196.5" y="653.5" width="10" height="10" fill="#3a8b30" stroke="#1f2c33" stroke-width="1"/>
<text x="212.6" y="662.80" font-size="11" fill="#1f2c33" textLength="271.5" lengthAdjust="spacingAndGlyphs">MongoDB cluster: Connection pool: available</text>
<text x="562.7" y="662.80" font-size="11" fill="#1f2c33" textLength="53.6" lengthAdjust="spacingAndGlyphs">[no data]</text>
<rect x="196.5" y="667.5" width="10" height="10" fill="#4a87b6" stroke="#1f2c33" stroke-width="1"/>
<text x="212.6" y="676.70" font-size="11" fill="#1f2c33" textLength="277.5" lengthAdjust="spacingAndGlyphs">MongoDB cluster: Connection pool: refreshing</text>
<text x="562.7" y="676.70" font-size="11" fill="#1f2c33" textLength="53.6" lengthAdjust="spacingAndGlyphs">[no data]</text>
<rect x="196.5" y="681.5" width="10" height="10" fill="#f44d1f" stroke="#1f2c33" stroke-width="1"/>
<text x="212.6" y="690.60" font-size="11" fill="#1f2c33" textLength="253.5" lengthAdjust="spacingAndGlyphs">MongoDB cluster: Connection pool: in use</text>
<text x="562.7" y="690.60" font-size="11" fill="#1f2c33" textLength="53.6" lengthAdjust="spacingAndGlyphs">[no data]</text>
<rect x="196.5" y="695.5" width="10" height="10" fill="#b0692f" stroke="#1f2c33" stroke-width="1"/>
<text x="212.6" y="704.50" font-size="11" fill="#1f2c33" textLength="259.5" lengthAdjust="spacingAndGlyphs">MongoDB cluster: Connection pool: scoped</text>
<text x="562.7" y="704.50" font-size="11" fill="#1f2c33" textLength="53.6" lengthAdjust="spacingAndGlyphs">[no data]</text>
</svg>

</body></html>
